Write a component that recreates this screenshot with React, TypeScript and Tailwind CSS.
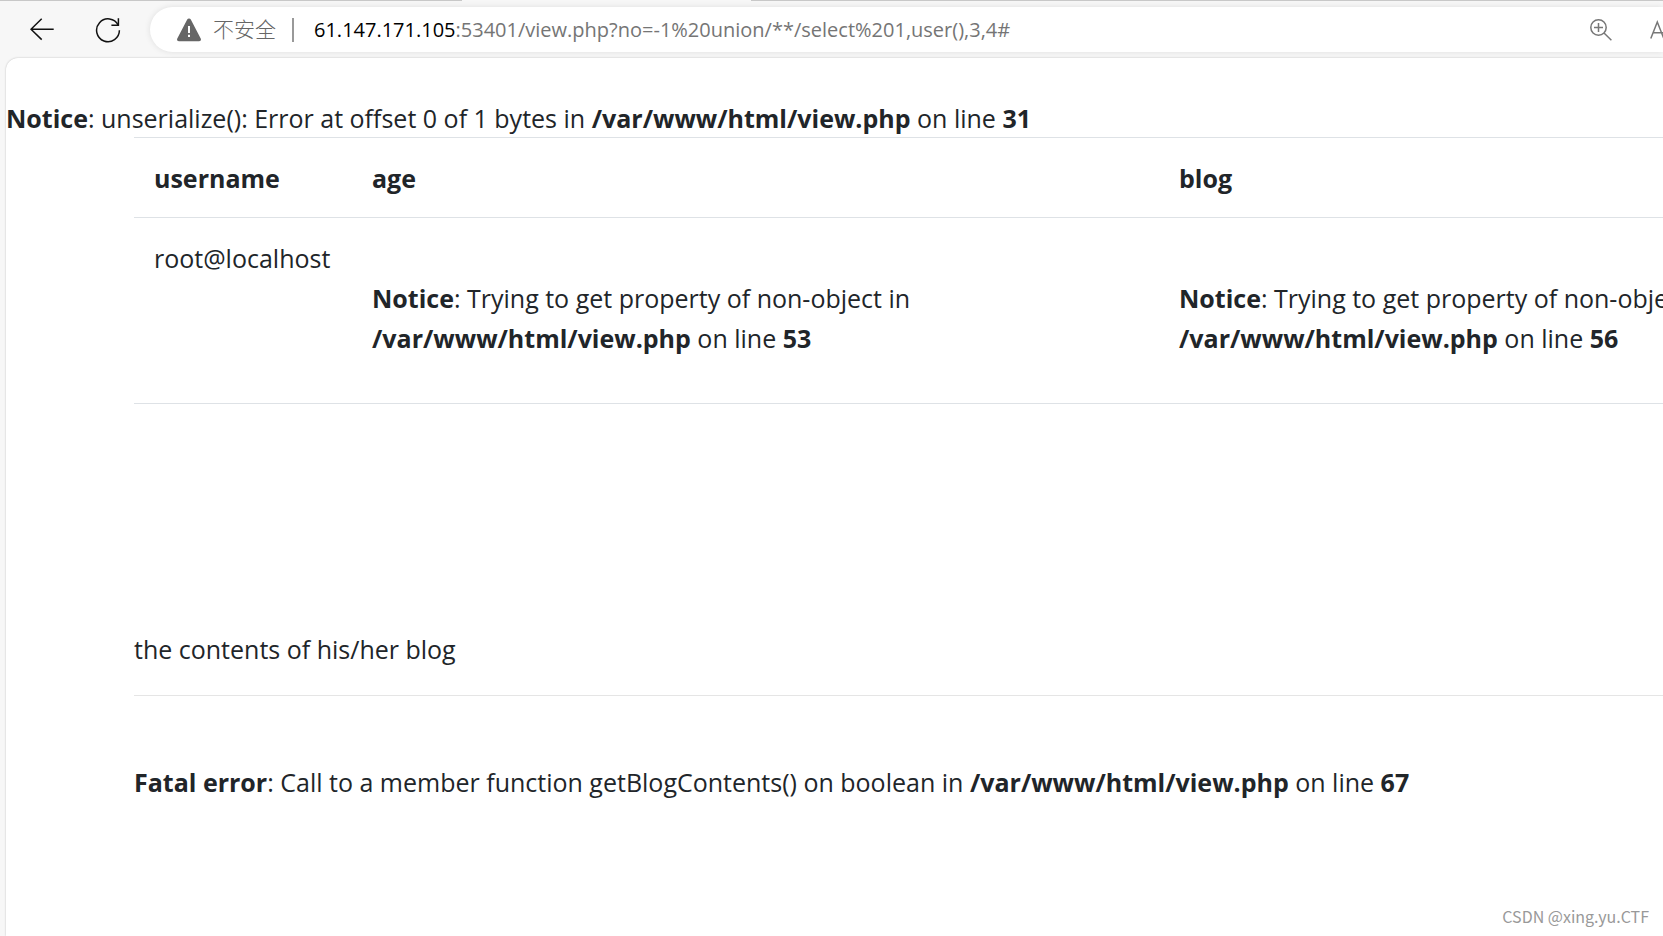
import type { ReactNode } from "react";

const FILE = "/var/www/html/view.php";

function PhpError({
  level,
  line,
  children,
}: {
  level: string;
  line: number;
  children: ReactNode;
}) {
  return (
    <p>
      <b>{level}</b>: {children} in <b>{FILE}</b> on line <b>{line}</b>
    </p>
  );
}

function Toolbar() {
  return (
    <header className="relative flex items-center pt-[7px] pb-[6px] overflow-hidden">
      {/* bottom edge of the tab strip, open under the active tab */}
      <div className="absolute inset-x-0 top-0 flex h-px">
        <div className="w-[462px] bg-[#c8c8c8]" />
        <div className="w-[289px]" />
        <div className="flex-1 bg-[#c8c8c8]" />
      </div>
      <button aria-label="Back" className="ml-[30px] shrink-0">
        <svg width="24" height="24" viewBox="0 0 24 24" fill="none" stroke="#111" strokeWidth="1.5">
          <path d="M23.7 11.2H1M11.7 .8 1 11.2l10.7 10.4" />
        </svg>
      </button>
      <button aria-label="Refresh" className="ml-[41px] shrink-0">
        <svg width="26" height="26" viewBox="0 0 26 26" fill="none" stroke="#111" strokeWidth="1.5">
          <path d="M23.2 8.2A11.4 11.4 0 1 0 24.4 13.2" />
          <path d="M23.4 1.2v7h-7" />
        </svg>
      </button>
      <div className="flex flex-1 items-center h-[45px] ml-[29px] pl-[27px] rounded-l-full bg-white shadow-[0_0_6px_rgba(0,0,0,0.1)] text-xl min-w-0">
        <button className="flex items-center shrink-0 gap-3 text-[#666]">
          <svg width="24" height="24" viewBox="0 0 24 24">
            <path
              d="M10.2 1.6a2.1 2.1 0 0 1 3.6 0l9.9 19c.7 1.3-.1 2.6-1.6 2.6H1.9c-1.5 0-2.3-1.3-1.6-2.6z"
              fill="#666"
            />
            <path d="M12 8v7M12 16.8v2.2" stroke="#fff" strokeWidth="2" />
          </svg>
          <span className="pb-1 text-[21px] leading-6 font-['Noto_Sans_CJK_SC',sans-serif] font-light">
            不安全
          </span>
        </button>
        <div className="w-0.5 h-6 ml-4 mr-5 bg-[#999] shrink-0" />
        <label htmlFor="url" className="text-black">
          61.147.171.105
        </label>
        <input
          id="url"
          defaultValue=":53401/view.php?no=-1%20union/**/select%201,user(),3,4#"
          className="flex-1 min-w-0 text-[#757575] outline-none"
        />
        <button aria-label="Zoom" className="mr-[38px] shrink-0">
          <svg width="22" height="22" viewBox="0 0 22 22" fill="none" stroke="#777" strokeWidth="1.5">
            <circle cx="8.5" cy="8.5" r="7.7" />
            <path d="M8.5 4v9M4 8.5h9M14 14l7.4 7.2" />
          </svg>
        </button>
        <button aria-label="Read aloud" className="shrink-0">
          <svg width="13" height="22" viewBox="0 0 13 22" fill="none" stroke="#777" strokeWidth="1.5">
            <path d="M.8 19.5 7.3 3 13.8 19.5M3 13.7h10" />
          </svg>
        </button>
      </div>
    </header>
  );
}

export default function App() {
  return (
    <div className="flex flex-col min-h-screen overflow-hidden bg-[#f7f7f7] font-['Open_Sans','Noto_Sans_CJK_SC',sans-serif]">
      <Toolbar />
      <main className="relative flex-1 ml-[6px] pt-10 rounded-tl-xl bg-white shadow-[0_0_2px_rgba(0,0,0,0.25)] text-[25px] leading-10 text-[#212529]">
        <PhpError level="Notice" line={31}>
          unserialize(): Error at offset 0 of 1 bytes
        </PhpError>
        <div className="ml-32 -mt-px">
          <table className="w-full table-fixed border-y border-[#dee2e6] text-left">
            <thead>
              <tr className="border-b border-[#dee2e6]">
                <th className="w-[218px] px-5 pt-5 pb-[19px]">username</th>
                <th className="w-[807px] px-5 pt-5 pb-[19px]">age</th>
                <th className="px-5 pt-5 pb-[19px]">blog</th>
              </tr>
            </thead>
            <tbody>
              <tr className="align-top">
                <td className="pl-5 pt-5">root@localhost</td>
                <td className="px-5 pt-[60px] pb-[45px]">
                  <div className="max-w-[600px]">
                    <PhpError level="Notice" line={53}>
                      Trying to get property of non-object
                    </PhpError>
                  </div>
                </td>
                <td className="pl-5 pt-[60px] pb-[45px] overflow-hidden">
                  <div className="w-[600px]">
                    <PhpError level="Notice" line={56}>
                      Trying to get property of non-object
                    </PhpError>
                  </div>
                </td>
              </tr>
            </tbody>
          </table>
          <p className="mt-[225px] pb-[26px] border-b border-[#e5e5e5]">
            the contents of his/her blog
          </p>
          <div className="mt-[66px]">
            <PhpError level="Fatal error" line={67}>
              Call to a member function getBlogContents() on boolean
            </PhpError>
          </div>
        </div>
        <footer className="absolute right-[14px] bottom-2 text-base leading-6 text-[#999] font-['Noto_Sans_CJK_SC',sans-serif]">
          CSDN @xing.yu.CTF
        </footer>
      </main>
    </div>
  );
}
